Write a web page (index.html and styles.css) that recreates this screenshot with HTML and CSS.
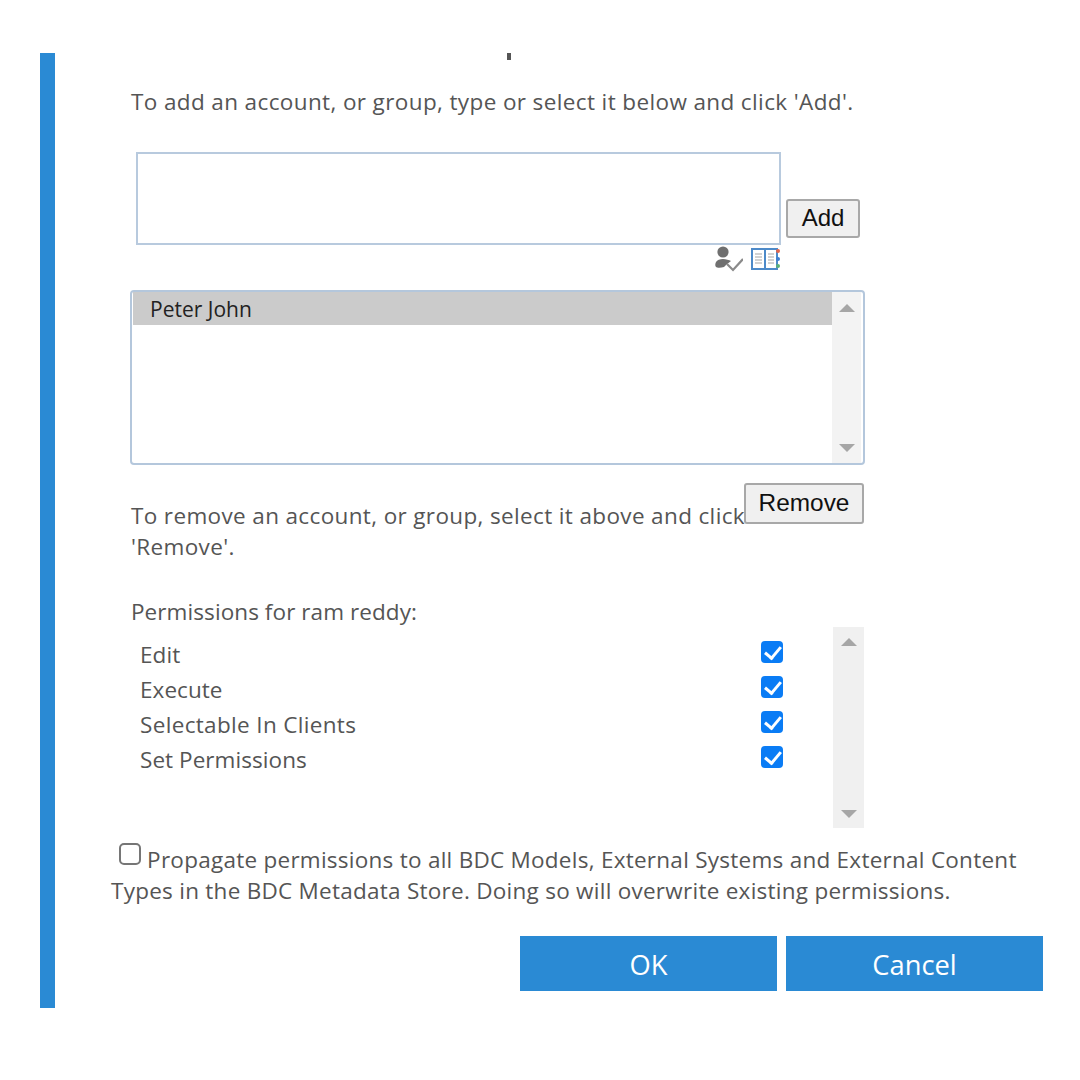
FILE: index.html
```html
<!DOCTYPE html>
<html lang="en">
<head>
<meta charset="utf-8">
<title>Set Permissions</title>
<link rel="stylesheet" href="styles.css">
</head>
<body>
<div class="dialog">
  <div class="dot"></div>
  <p class="intro">To add an account, or group, type or select it below and click 'Add'.</p>
  <div class="add-row">
    <div class="picker">
      <div class="people-box"></div>
      <div class="picker-icons">
        <svg class="icon" width="30" height="26" viewBox="0 0 30 26">
          <circle cx="10" cy="6" r="5.6" fill="#6f6f6f"/>
          <path d="M3 21c-1-1-1-3 0-5 1-2 4-3 7-3 3 0 6 1 8 2l-5 4-2 2c-3 1-7 1-8 0z" fill="#6f6f6f"/>
          <path d="M14 18l6 6 10-11" fill="none" stroke="#8a8a8a" stroke-width="2.2"/>
        </svg>
        <svg class="icon" width="32" height="26" viewBox="0 0 32 26">
          <rect x="3" y="3" width="13" height="20" fill="#fff" stroke="#4d8ac9" stroke-width="2"/>
          <rect x="16" y="3" width="12" height="20" fill="#fff" stroke="#4d8ac9" stroke-width="2"/>
          <path d="M6 8h7M6 11h7M6 14h7M6 17h7M19 8h6M19 11h6M19 14h6M19 17h6" stroke="#c4c4c4" stroke-width="1.4"/>
          <circle cx="29" cy="5" r="2" fill="#e2654c"/>
          <circle cx="29" cy="13" r="2" fill="#3f7fd0"/>
          <circle cx="29" cy="20" r="2" fill="#5bb07a"/>
        </svg>
      </div>
    </div>
    <button class="btn btn-add" type="button">Add</button>
  </div>
  <div class="account-list">
    <div class="list-body">
      <div class="list-item">Peter John</div>
    </div>
    <div class="scrollbar scrollbar-list">
      <span class="arrow-up"></span>
      <span class="arrow-down"></span>
    </div>
  </div>
  <div class="remove-row">
    <p class="remove-text">To remove an account, or group, select it above and click 'Remove'.</p>
    <button class="btn btn-remove" type="button">Remove</button>
  </div>
  <p class="perm-title">Permissions for ram reddy:</p>
  <div class="perm-panel">
    <div class="perm-list">
      <div class="perm-row"><span>Edit</span><input type="checkbox" checked></div>
      <div class="perm-row"><span>Execute</span><input type="checkbox" checked></div>
      <div class="perm-row"><span class="wide">Selectable In Clients</span><input type="checkbox" checked></div>
      <div class="perm-row"><span>Set Permissions</span><input type="checkbox" checked></div>
    </div>
    <div class="scrollbar scrollbar-perm">
      <span class="arrow-up"></span>
      <span class="arrow-down"></span>
    </div>
  </div>
  <p class="propagate"><input class="prop-check" type="checkbox"> Propagate permissions to all BDC Models, External Systems and External Content Types in the BDC Metadata Store. Doing so will overwrite existing permissions.</p>
  <div class="actions">
    <button class="action" type="button">OK</button>
    <button class="action" type="button">Cancel</button>
  </div>
</div>
</body>
</html>
```
FILE: styles.css
```css
* { box-sizing: border-box; }
html, body { margin: 0; padding: 0; background: #fff; }
body { width: 1080px; height: 1080px; overflow: hidden; font-family: "Open Sans", "Noto Sans", sans-serif; color: #444; }
p { margin: 0; }
.dialog { margin: 53px 0 0 40px; width: 1003px; height: 955px; border-left: 15px solid #2a8ad4; padding: 0 0 0 56px; font-size: 22.5px; line-height: 31px; }
.dot { width: 4px; height: 7px; background: #555; margin: 0 0 0 396px; }
.intro { margin: 26px 0 0 20px; white-space: nowrap; color: #555; letter-spacing: .38px; }
.add-row { display: flex; align-items: flex-start; margin: 35px 0 0 25px; }
.picker { width: 645px; display: flex; flex-direction: column; }
.people-box { height: 93px; border: 2px solid #b8cade; background: #fff; }
.picker-icons { display: flex; justify-content: flex-end; gap: 6px; height: 30px; }
.icon { display: block; margin-top: 1px; }
.btn { font-family: "Liberation Sans", sans-serif; color: #111; background: #f0f0f0; border: 2px solid #a8a8a8; border-radius: 3px; padding: 0 0 2px; }
.btn-add { width: 74px; height: 39px; margin: 47px 0 0 5px; font-size: 24px; line-height: 31px; }
.account-list { display: flex; width: 735px; height: 175px; margin: 15px 0 0 19px; border: 2px solid #b4c7dc; border-radius: 4px; padding: 0 2px 0 1px; }
.list-body { flex: 1; }
.list-item { height: 33px; background: #cbcbcb; padding-left: 17px; font-size: 21px; line-height: 34px; color: #222; }
.scrollbar { width: 31px; display: flex; flex-direction: column; justify-content: space-between; align-items: center; background: #f0f0f0; }
.scrollbar-list { width: 29px; background: #f3f3f3; padding: 12px 0 11px; }
.arrow-up { width: 0; height: 0; border-left: 8px solid transparent; border-right: 8px solid transparent; border-bottom: 8px solid #a6a6a6; }
.arrow-down { width: 0; height: 0; border-left: 8px solid transparent; border-right: 8px solid transparent; border-top: 8px solid #a6a6a6; }
.remove-row { display: flex; align-items: flex-start; margin: 18px 0 0 20px; width: 733px; }
.remove-text { width: 620px; margin: 17px -7px 0 0; color: #555; flex: none; letter-spacing: .36px; }
.btn-remove { width: 120px; height: 41px; font-size: 24.4px; flex: none; position: relative; }
.perm-title { margin: 34px 0 0 20px; color: #555; letter-spacing: .08px; }
.perm-panel { display: flex; justify-content: space-between; width: 733px; height: 201px; margin: 0 0 0 20px; }
.perm-list { width: 652px; padding: 11px 0 0 9px; }
.perm-row { display: flex; justify-content: space-between; align-items: flex-start; height: 35px; color: #555; }
.perm-row span { display: block; margin-top: 1px; letter-spacing: .06px; }
.perm-row span.wide { letter-spacing: .34px; }
.perm-row input { appearance: none; width: 22px; height: 22px; margin: 3px 0 0 0; border-radius: 4px; background: #0a7cf5; position: relative; }
.perm-row input::after { content: ""; position: absolute; left: 7px; top: 2px; width: 7px; height: 13px; border: solid #fff; border-width: 0 3.5px 3.5px 0; transform: rotate(40deg); }
.scrollbar-perm { padding: 11px 0 10px; }
.propagate { width: 915px; margin: 15px 0 0 0; color: #555; letter-spacing: .26px; }
.prop-check { appearance: none; width: 22px; height: 22px; margin: 0 0 0 8px; border: 2px solid #767676; border-radius: 5px; background: #fff; vertical-align: 3px; }
.actions { display: flex; justify-content: flex-end; gap: 9px; margin-top: 30px; width: 932px; }
.action { width: 257px; height: 55px; background: #2a8ad4; color: #fff; border: 0; padding: 2px 0 0; font-family: "Open Sans", sans-serif; font-size: 27.3px; }
```
